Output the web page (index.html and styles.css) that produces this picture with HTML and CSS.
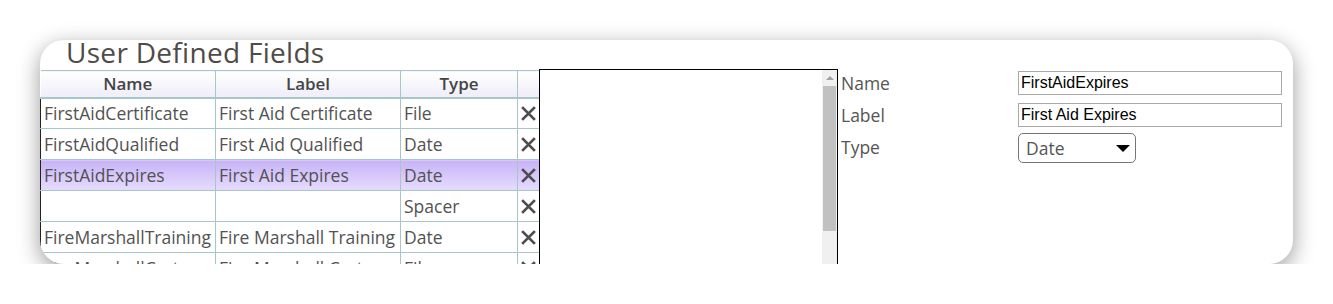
FILE: index.html
```html
<!DOCTYPE html>
<html>
	<head>
		<meta charset="UTF-8">
		<title>User Defined Fields</title>
		<link rel="stylesheet" href="styles.css">
	</head>
	<body>
		<div class="card">
			<h1 class="title">User Defined Fields</h1>
			<div class="card-body">
				<div class="grid-wrap">
					<table class="grid">
						<colgroup>
							<col class="c-name">
							<col class="c-label">
							<col class="c-type">
							<col class="c-del">
						</colgroup>
						<thead>
							<tr><th>Name</th><th>Label</th><th>Type</th><th></th></tr>
						</thead>
						<tbody>
							<tr><td>FirstAidCertificate</td><td>First Aid Certificate</td><td>File</td><td class="del"><svg viewBox="0 0 16 16"><path d="M2 2L14 14M14 2L2 14"/></svg></td></tr>
							<tr><td>FirstAidQualified</td><td>First Aid Qualified</td><td>Date</td><td class="del"><svg viewBox="0 0 16 16"><path d="M2 2L14 14M14 2L2 14"/></svg></td></tr>
							<tr class="selected"><td>FirstAidExpires</td><td>First Aid Expires</td><td>Date</td><td class="del"><svg viewBox="0 0 16 16"><path d="M2 2L14 14M14 2L2 14"/></svg></td></tr>
							<tr><td></td><td></td><td>Spacer</td><td class="del"><svg viewBox="0 0 16 16"><path d="M2 2L14 14M14 2L2 14"/></svg></td></tr>
							<tr><td>FireMarshallTraining</td><td>Fire Marshall Training</td><td>Date</td><td class="del"><svg viewBox="0 0 16 16"><path d="M2 2L14 14M14 2L2 14"/></svg></td></tr>
							<tr><td>FireMarshallCert</td><td>Fire Marshall Cert</td><td>File</td><td class="del"><svg viewBox="0 0 16 16"><path d="M2 2L14 14M14 2L2 14"/></svg></td></tr>
						</tbody>
					</table>
				</div>
				<div class="list-panel">
					<div class="list-content"></div>
					<div class="scrollbar">
						<div class="scroll-up"><span class="arrow-up"></span></div>
						<div class="scroll-thumb"></div>
						<div class="scroll-track"></div>
					</div>
				</div>
				<div class="field-form">
					<label class="f-label">Name</label>
					<input class="f-input" type="text" value="FirstAidExpires">
					<label class="f-label">Label</label>
					<input class="f-input" type="text" value="First Aid Expires">
					<label class="f-label f-label-type">Type</label>
					<div class="f-select">
						<span>Date</span>
						<span class="caret"></span>
					</div>
				</div>
			</div>
		</div>
	</body>
</html>
```

FILE: styles.css
```css
*{
	padding: 0;
	margin: 0;
	box-sizing: border-box;
}
body{
	background-color: #ffffff;
	padding: 40px 40px 0 40px;
	font-family: "Open Sans", "Liberation Sans", sans-serif;
	color: #525252;
}
.card{
	width: 1253px;
	height: 224px;
	background-color: #fff;
	border-radius: 24px;
	overflow: hidden;
	box-shadow: 0 6px 22px rgba(0,0,0,0.4);
}
.title{
	height: 30px;
	line-height: 24px;
	padding-left: 26px;
	font-size: 28px;
	font-weight: 400;
	letter-spacing: 0.3px;
	color: #4f4b48;
}
.card-body{
	display: flex;
	align-items: flex-start;
}
.grid-wrap{
	width: 499px;
	flex: none;
	overflow: hidden;
}
.grid{
	width: 499px;
	border-collapse: collapse;
	table-layout: fixed;
	font-size: 17.5px;
}
.c-name{ width: 175px; }
.c-label{ width: 185px; }
.c-type{ width: 117px; }
.c-del{ width: 22px; }
.grid th{
	height: 27px;
	font-weight: 600;
	font-size: 17px;
	line-height: 24px;
	color: #454545;
	background: linear-gradient(#ffffff, #eeedf9);
	border: 1px solid #a6c6c9;
	border-bottom: 2px solid #a6c6c9;
	text-align: center;
}
.grid th:first-child{
	border-left: none;
}
.grid td{
	height: 31px;
	padding: 0 3px;
	line-height: 26px;
	border: 1px solid #a6c6c9;
	white-space: nowrap;
	overflow: hidden;
}
.grid td:first-child{
	border-left: 1px solid #222;
}
.grid tr.selected td{
	background: linear-gradient(#c7b3f7, #e6dcfd);
}
.grid td.del{
	padding: 0;
	text-align: center;
}
.del svg{
	width: 17px;
	height: 17px;
	display: block;
	margin: 0 auto;
	fill: none;
	stroke: #4e4e4e;
	stroke-width: 2.6;
}
.list-panel{
	width: 299px;
	height: 220px;
	flex: none;
	margin-top: -1px;
	border: 1px solid #000;
	border-bottom: none;
	display: flex;
}
.list-content{
	flex: 1;
}
.scrollbar{
	width: 15px;
	display: flex;
	flex-direction: column;
	background-color: #f0f0f0;
}
.scroll-up{
	height: 16px;
	display: flex;
	justify-content: center;
	padding-top: 6px;
}
.arrow-up{
	width: 0;
	height: 0;
	border-left: 4px solid transparent;
	border-right: 4px solid transparent;
	border-bottom: 4px solid #a3a3a3;
}
.scroll-thumb{
	height: 145px;
	margin: 0 1px;
	background-color: #c1c1c1;
}
.scroll-track{
	flex: 1;
}
.field-form{
	flex: 1;
	padding: 1px 0 0 3px;
	display: grid;
	grid-template-columns: 177px 264px;
	row-gap: 8px;
	align-items: center;
}
.f-label{
	font-size: 17.5px;
	color: #555;
	line-height: 24px;
}
.f-label-type{
	margin-top: -4px;
}
.f-input{
	height: 24px;
	width: 264px;
	border: 1px solid #a9a9a9;
	padding: 0 2px;
	font-family: "Liberation Sans", Arial, sans-serif;
	font-size: 16px;
	color: #000;
	outline: none;
}
.f-select{
	width: 118px;
	height: 30px;
	margin-top: -2px;
	border: 1px solid #767676;
	border-radius: 5px;
	display: flex;
	align-items: center;
	justify-content: space-between;
	padding: 0 5px 0 7px;
	font-size: 17.5px;
	color: #555;
}
.caret{
	width: 0;
	height: 0;
	border-left: 7px solid transparent;
	border-right: 7px solid transparent;
	border-top: 7px solid #000;
}
```
